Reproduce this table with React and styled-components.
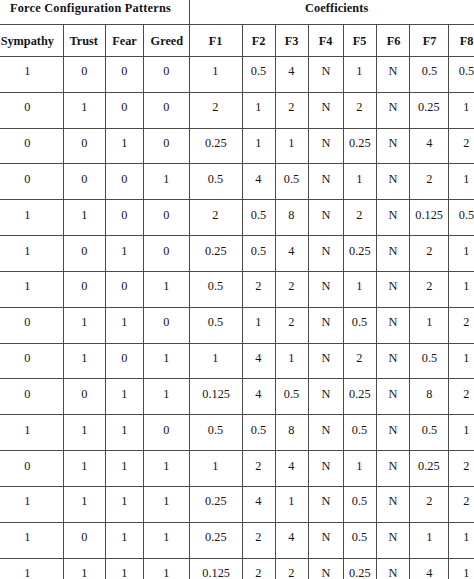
import styled, { createGlobalStyle } from "styled-components";

const GlobalStyle = createGlobalStyle`
  html, body {
    margin: 0;
    padding: 0;
    background: #ffffff;
    overflow: hidden;
  }
`;

const widths = [70.5, 42.2, 38.6, 45.4, 53, 33.3, 32.7, 35, 33.3, 33.3, 39, 36];

const forces = ["Sympathy", "Trust", "Fear", "Greed"];
const coefs = ["F1", "F2", "F3", "F4", "F5", "F6", "F7", "F8"];

const rows = [
    ["1", "0", "0", "0", "1", "0.5", "4", "N", "1", "N", "0.5", "0.5"],
    ["0", "1", "0", "0", "2", "1", "2", "N", "2", "N", "0.25", "1"],
    ["0", "0", "1", "0", "0.25", "1", "1", "N", "0.25", "N", "4", "2"],
    ["0", "0", "0", "1", "0.5", "4", "0.5", "N", "1", "N", "2", "1"],
    ["1", "1", "0", "0", "2", "0.5", "8", "N", "2", "N", "0.125", "0.5"],
    ["1", "0", "1", "0", "0.25", "0.5", "4", "N", "0.25", "N", "2", "1"],
    ["1", "0", "0", "1", "0.5", "2", "2", "N", "1", "N", "2", "1"],
    ["0", "1", "1", "0", "0.5", "1", "2", "N", "0.5", "N", "1", "2"],
    ["0", "1", "0", "1", "1", "4", "1", "N", "2", "N", "0.5", "1"],
    ["0", "0", "1", "1", "0.125", "4", "0.5", "N", "0.25", "N", "8", "2"],
    ["1", "1", "1", "0", "0.5", "0.5", "8", "N", "0.5", "N", "0.5", "1"],
    ["0", "1", "1", "1", "1", "2", "4", "N", "1", "N", "0.25", "2"],
    ["1", "1", "1", "1", "0.25", "4", "1", "N", "0.5", "N", "2", "2"],
    ["1", "0", "1", "1", "0.25", "2", "4", "N", "0.5", "N", "1", "1"],
    ["1", "1", "1", "1", "0.125", "2", "2", "N", "0.25", "N", "4", "1"],
];

const App = () => {
    return (
        <>
            <GlobalStyle/>
            <Table>
                <colgroup>
                    {widths.map((w, i) => <col key={i} style={{width: w}}/>)}
                </colgroup>
                <thead>
                    <GroupRow>
                        <HeadCell colSpan={4}><Label $spacing={0.25}>Force Configuration Patterns</Label></HeadCell>
                        <HeadCell colSpan={8}><Label $spacing={0.1}>Coefficients</Label></HeadCell>
                    </GroupRow>
                    <NameRow>
                        {[...forces, ...coefs].map((item) => (
                            <HeadCell key={item}><Label>{item}</Label></HeadCell>
                        ))}
                    </NameRow>
                </thead>
                <tbody>
                    {rows.map((row, r) => (
                        <DataRow key={r}>
                            {row.map((value, c) => (
                                <Cell key={c}><Label>{value}</Label></Cell>
                            ))}
                        </DataRow>
                    ))}
                </tbody>
            </Table>
        </>
    );
};

export default App;

const Table = styled.table`
  margin-top: -10px;
  margin-left: -8px;
  width: 492px;
  table-layout: fixed;
  border-collapse: collapse;
  font-family: "Liberation Serif", "Times New Roman", serif;
  font-size: 13.5px;
  color: #141414;

  td, th {
    border: 1px solid #4a4a4a;
    text-align: center;
    padding: 0;
    white-space: nowrap;
    overflow: hidden;
  }
`;

const GroupRow = styled.tr`
  height: 34px;
`;

const NameRow = styled.tr`
  height: 32px;
`;

const DataRow = styled.tr`
  height: 35.84px;
`;

const HeadCell = styled.th`
  font-weight: bold;
  vertical-align: middle;
`;

const Cell = styled.td`
  font-weight: normal;
  vertical-align: middle;
  padding-bottom: 6px !important;
`;

const Label = styled.span`
  display: inline-block;
  letter-spacing: ${({$spacing}) => ($spacing || 0)}px;
  transform: scaleX(0.91);
`;
